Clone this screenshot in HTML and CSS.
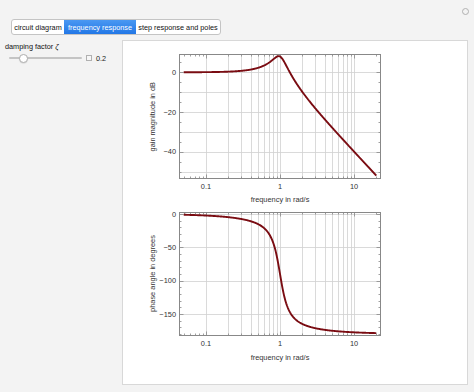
FILE: index.html
```html
<!DOCTYPE html>
<html>
<head>
<meta charset="utf-8">
<link rel="stylesheet" href="styles.css">
</head>
<body>
<div class="app">
  <div class="topbar"><span class="gear"></span></div>
  <div class="tabs">
    <div class="tab t1">circuit diagram</div>
    <div class="tab t2 active">frequency response</div>
    <div class="tab t3">step response and poles</div>
  </div>
  <div class="main">
    <div class="controls">
      <div class="ctl-label">damping factor <i>ζ</i></div>
      <div class="slider-row">
        <div class="slider"><div class="track"></div><div class="thumb"></div></div>
        <span class="plus"></span>
        <span class="val">0.2</span>
      </div>
    </div>
    <div class="panel">
      <svg class="plots" width="344" height="343" viewBox="123 41 344 343" xmlns="http://www.w3.org/2000/svg">
        <g id="grid" class="grid"></g>
        <rect class="frame" x="179.5" y="54.5" width="201" height="124"/>
        <rect class="frame" x="179.5" y="212.5" width="201" height="123"/>
        <g id="ticks" class="ticks"></g>
        <path id="mag" class="curve"/>
        <path id="phase" class="curve"/>
        <g class="lbl">
          <text x="176" y="74.8" text-anchor="end">0</text>
          <text x="176" y="114.5" text-anchor="end">−20</text>
          <text x="176" y="154.2" text-anchor="end">−40</text>
          <text x="206" y="189" text-anchor="middle">0.1</text>
          <text x="280" y="189" text-anchor="middle">1</text>
          <text x="354" y="189" text-anchor="middle">10</text>
          <text class="title" x="280" y="201.5" text-anchor="middle">frequency in rad/s</text>
          <text class="title" x="0" y="0" text-anchor="middle" transform="translate(154.5 116.7) rotate(-90)">gain magnitude in dB</text>

          <text x="176" y="216.5" text-anchor="end">0</text>
          <text x="176" y="249.8" text-anchor="end">−50</text>
          <text x="176" y="283.1" text-anchor="end">−100</text>
          <text x="176" y="316.5" text-anchor="end">−150</text>
          <text x="206" y="346" text-anchor="middle">0.1</text>
          <text x="280" y="346" text-anchor="middle">1</text>
          <text x="354" y="346" text-anchor="middle">10</text>
          <text class="title" x="280" y="359.5" text-anchor="middle">frequency in rad/s</text>
          <text class="title" x="0" y="0" text-anchor="middle" transform="translate(154.5 273.5) rotate(-90)">phase angle in degrees</text>
        </g>
      </svg>
    </div>
  </div>
</div>
<script src="script.js"></script>
</body>
</html>
```

FILE: styles.css
```css
html, body {
  margin: 0;
  padding: 0;
}
body {
  background: #f3f3f3;
  font-family: "Liberation Sans", Arial, sans-serif;
  width: 474px;
  height: 392px;
  overflow: hidden;
  color: #1a1a1a;
}
.topbar {
  height: 19px;
  box-sizing: border-box;
  display: flex;
  justify-content: flex-end;
  align-items: flex-start;
  padding: 8px 5px 0 0;
}
.gear {
  width: 7px;
  height: 7px;
  border-radius: 50%;
  border: 1.5px solid #b0b0b0;
  box-sizing: border-box;
}
.tabs {
  display: flex;
  margin-left: 11px;
  width: 210px;
  height: 16px;
  box-sizing: border-box;
  border: 1px solid #c4c4c4;
  border-radius: 3px;
  background: #fff;
  overflow: hidden;
}
.tab {
  display: flex;
  align-items: center;
  justify-content: center;
  font-size: 7.3px;
  color: #111;
  white-space: nowrap;
}
.t1 { width: 52px; }
.t2 { width: 72px; }
.t3 { flex: 1; }
.tab.active {
  background: linear-gradient(#4a98f2, #2277e6);
  color: #fff;
}
.main {
  display: flex;
  margin-top: 5px;
}
.controls {
  width: 122px;
  padding: 2px 0 0 5px;
  box-sizing: border-box;
}
.ctl-label {
  font-size: 7.3px;
  line-height: 9px;
  color: #111;
}
.slider-row {
  display: flex;
  align-items: center;
  height: 10px;
  margin-top: 2px;
}
.slider {
  position: relative;
  width: 73px;
  height: 10px;
  margin-left: 4px;
  display: flex;
  align-items: center;
}
.track {
  width: 100%;
  height: 2px;
  border-radius: 1px;
  background: #c4c4c4;
}
.thumb {
  position: absolute;
  left: 10px;
  top: 0.5px;
  width: 9px;
  height: 9px;
  box-sizing: border-box;
  border-radius: 50%;
  background: #fff;
  border: 1px solid #b0b0b0;
  box-shadow: 0 0.5px 1px rgba(0,0,0,0.15);
}
.plus {
  width: 4px;
  height: 4px;
  border: 1px solid #b0b0b0;
  background: #f6f6f6;
  margin-left: 4px;
}
.val {
  font-size: 7.3px;
  margin-left: 4px;
  color: #222;
}
.panel {
  width: 346px;
  height: 345px;
  box-sizing: border-box;
  border: 1px solid #d8d8d8;
  background: #fff;
}
.plots {
  display: block;
}
.grid line {
  stroke: #d0d0d0;
  stroke-width: 0.8;
}
.frame {
  fill: none;
  stroke: #888;
  stroke-width: 1;
}
.ticks line {
  stroke: #888;
  stroke-width: 0.8;
}
.curve {
  fill: none;
  stroke: #7a0c12;
  stroke-width: 1.9;
  stroke-linejoin: round;
}
.lbl text {
  font-family: "Liberation Sans", Arial, sans-serif;
  font-size: 7.4px;
  fill: #333;
}
.lbl text.title {
  font-size: 7.4px;
  fill: #333;
}
```

FILE: script.js
```js
(function () {
  var NS = 'http://www.w3.org/2000/svg';
  var zeta = 0.2;
  var X = function (w) { return 280 + 74 * Math.log10(w); };
  var Ym = function (db) { return 72.3 - db * 1.985; };
  var Yp = function (deg) { return 214 - deg * 0.666; };

  function line(g, x1, y1, x2, y2) {
    var l = document.createElementNS(NS, 'line');
    l.setAttribute('x1', x1); l.setAttribute('y1', y1);
    l.setAttribute('x2', x2); l.setAttribute('y2', y2);
    g.appendChild(l);
  }

  var grid = document.getElementById('grid');
  var ticks = document.getElementById('ticks');
  var plots = [
    { top: 54.5, bottom: 178.5 },
    { top: 212.5, bottom: 335.5 }
  ];
  var L = 179.5, R = 380.5;

  var gw = [];
  [0.1, 1].forEach(function (d) {
    for (var k = 1; k <= 9; k++) gw.push(k * d);
  });
  gw.push(10);
  plots.forEach(function (p) {
    gw.forEach(function (w) {
      var x = Math.round(X(w)) + 0.5;
      line(grid, x, p.top, x, p.bottom);
    });
    var tw = [];
    [0.01, 0.1, 1, 10].forEach(function (d) {
      for (var k = 1; k <= 9; k++) tw.push(k * d);
    });
    tw.forEach(function (w) {
      var x = X(w);
      if (x < L + 1 || x > R - 1) return;
      x = Math.round(x) + 0.5;
      var major = Math.abs(Math.log10(w) - Math.round(Math.log10(w))) < 1e-6;
      var len = major ? 4 : 2;
      line(ticks, x, p.bottom, x, p.bottom - len);
      line(ticks, x, p.top, x, p.top + len);
    });
  });

  for (var db = 0; db >= -50; db -= 10) {
    var y = Math.round(Ym(db)) + 0.5;
    line(grid, L, y, R, y);
  }
  for (var d2 = 5; d2 >= -50; d2 -= 5) {
    var yy = Ym(d2);
    if (yy < 55 || yy > 178) continue;
    yy = Math.round(yy) + 0.5;
    var len = (d2 % 20 === 0) ? 4 : 2;
    line(ticks, L, yy, L + len, yy);
    line(ticks, R, yy, R - len, yy);
  }
  for (var ph = 0; ph >= -150; ph -= 50) {
    var y2 = Math.round(Yp(ph)) + 0.5;
    line(grid, L, y2, R, y2);
  }
  for (var p2 = 0; p2 >= -180; p2 -= 10) {
    var y3 = Yp(p2);
    if (y3 < 213 || y3 > 335) continue;
    y3 = Math.round(y3) + 0.5;
    var len2 = (p2 % 50 === 0) ? 4 : 2;
    line(ticks, L, y3, L + len2, y3);
    line(ticks, R, y3, R - len2, y3);
  }

  var n = 500, a = Math.log10(0.05), b = Math.log10(20);
  var dm = '', dp = '';
  for (var i = 0; i <= n; i++) {
    var w = Math.pow(10, a + (b - a) * i / n);
    var re = 1 - w * w, im = 2 * zeta * w;
    var mag = -10 * Math.log10(re * re + im * im);
    var phase = -Math.atan2(im, re) * 180 / Math.PI;
    var x = X(w).toFixed(2);
    dm += (i ? 'L' : 'M') + x + ',' + Ym(mag).toFixed(2);
    dp += (i ? 'L' : 'M') + x + ',' + Yp(phase).toFixed(2);
  }
  document.getElementById('mag').setAttribute('d', dm);
  document.getElementById('phase').setAttribute('d', dp);
})();
```
